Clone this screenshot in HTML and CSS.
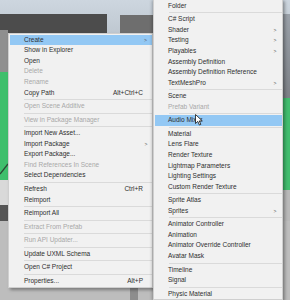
FILE: index.html
```html
<!DOCTYPE html>
<html lang="en">
<head>
    <meta charset="UTF-8">
    <meta name="viewport" content="width=device-width, initial-scale=1.0">
    <title>Project - Create menu</title>
    <link rel="stylesheet" href="styles.css">
</head>
<body>
    <div class="scene">
        <div class="sky"></div>
        <div class="obj box-a"></div>
        <div class="obj box-b"></div>
        <div class="obj box-c"></div>
        <div class="obj grass-l"></div>
        <div class="obj grass-r"></div>
        <div class="obj pale-l"></div>
        <div class="obj dark-l"></div>
        <div class="obj floor"></div>
        <div class="obj post"></div>
        <div class="obj right-top"></div>
        <svg class="obj ridge" width="8" height="20" viewBox="0 0 8 20">
            <path d="M0 16 L8 6" stroke="#2d4a36" stroke-width="1.4"/>
        </svg>
    </div>

    <!-- project window context menu -->
    <div class="menu context">
        <div class="item hover"><span class="label">Create</span><span class="arrow">&gt;</span></div>
        <div class="item"><span class="label">Show in Explorer</span><span class="arrow"></span></div>
        <div class="item"><span class="label">Open</span><span class="arrow"></span></div>
        <div class="item off"><span class="label">Delete</span><span class="arrow"></span></div>
        <div class="item off"><span class="label">Rename</span><span class="arrow"></span></div>
        <div class="item"><span class="label">Copy Path</span><span class="key">Alt+Ctrl+C</span><span class="arrow"></span></div>
        <div class="sep"></div>
        <div class="item off"><span class="label">Open Scene Additive</span><span class="arrow"></span></div>
        <div class="sep"></div>
        <div class="item off"><span class="label">View in Package Manager</span><span class="arrow"></span></div>
        <div class="sep"></div>
        <div class="item"><span class="label">Import New Asset...</span><span class="arrow"></span></div>
        <div class="item"><span class="label">Import Package</span><span class="arrow">&gt;</span></div>
        <div class="item"><span class="label">Export Package...</span><span class="arrow"></span></div>
        <div class="item off"><span class="label">Find References In Scene</span><span class="arrow"></span></div>
        <div class="item"><span class="label">Select Dependencies</span><span class="arrow"></span></div>
        <div class="sep"></div>
        <div class="item"><span class="label">Refresh</span><span class="key">Ctrl+R</span><span class="arrow"></span></div>
        <div class="item"><span class="label">Reimport</span><span class="arrow"></span></div>
        <div class="sep"></div>
        <div class="item"><span class="label">Reimport All</span><span class="arrow"></span></div>
        <div class="sep"></div>
        <div class="item off"><span class="label">Extract From Prefab</span><span class="arrow"></span></div>
        <div class="sep"></div>
        <div class="item off"><span class="label">Run API Updater...</span><span class="arrow"></span></div>
        <div class="sep"></div>
        <div class="item"><span class="label">Update UXML Schema</span><span class="arrow"></span></div>
        <div class="sep"></div>
        <div class="item"><span class="label">Open C# Project</span><span class="arrow"></span></div>
        <div class="sep"></div>
        <div class="item"><span class="label">Properties...</span><span class="key">Alt+P</span><span class="arrow"></span></div>
    </div>

    <!-- Create submenu -->
    <div class="menu sub">
        <div class="item"><span class="label">Folder</span><span class="arrow"></span></div>
        <div class="sep"></div>
        <div class="item"><span class="label">C# Script</span><span class="arrow"></span></div>
        <div class="item"><span class="label">Shader</span><span class="arrow">&gt;</span></div>
        <div class="item"><span class="label">Testing</span><span class="arrow">&gt;</span></div>
        <div class="item"><span class="label">Playables</span><span class="arrow">&gt;</span></div>
        <div class="item"><span class="label">Assembly Definition</span><span class="arrow"></span></div>
        <div class="item"><span class="label">Assembly Definition Reference</span><span class="arrow"></span></div>
        <div class="item"><span class="label">TextMeshPro</span><span class="arrow">&gt;</span></div>
        <div class="sep"></div>
        <div class="item"><span class="label">Scene</span><span class="arrow"></span></div>
        <div class="item off"><span class="label">Prefab Variant</span><span class="arrow"></span></div>
        <div class="sep"></div>
        <div class="item hover"><span class="label">Audio Mixer</span><span class="arrow"></span></div>
        <div class="sep"></div>
        <div class="item"><span class="label">Material</span><span class="arrow"></span></div>
        <div class="item"><span class="label">Lens Flare</span><span class="arrow"></span></div>
        <div class="item"><span class="label">Render Texture</span><span class="arrow"></span></div>
        <div class="item"><span class="label">Lightmap Parameters</span><span class="arrow"></span></div>
        <div class="item"><span class="label">Lighting Settings</span><span class="arrow"></span></div>
        <div class="item"><span class="label">Custom Render Texture</span><span class="arrow"></span></div>
        <div class="sep"></div>
        <div class="item"><span class="label">Sprite Atlas</span><span class="arrow"></span></div>
        <div class="item"><span class="label">Sprites</span><span class="arrow">&gt;</span></div>
        <div class="sep"></div>
        <div class="item"><span class="label">Animator Controller</span><span class="arrow"></span></div>
        <div class="item"><span class="label">Animation</span><span class="arrow"></span></div>
        <div class="item"><span class="label">Animator Override Controller</span><span class="arrow"></span></div>
        <div class="item"><span class="label">Avatar Mask</span><span class="arrow"></span></div>
        <div class="sep"></div>
        <div class="item"><span class="label">Timeline</span><span class="arrow"></span></div>
        <div class="item"><span class="label">Signal</span><span class="arrow"></span></div>
        <div class="sep"></div>
        <div class="item"><span class="label">Physic Material</span><span class="arrow"></span></div>
    </div>

    <svg class="cursor" width="8" height="12" viewBox="0 0 8 12">
        <path d="M0.5 0.5 L0.5 9.5 L2.8 7.4 L4.4 11 L5.8 10.4 L4.3 6.9 L7.3 6.9 Z" fill="#fff" stroke="#111" stroke-width="0.8" stroke-linejoin="round"/>
    </svg>
</body>
</html>
```

FILE: styles.css
```css
body {
    margin: 0;
    width: 290px;
    height: 300px;
    overflow: hidden;
    position: relative;
    font-family: "Liberation Sans", Arial, sans-serif;
    background: #b9b9b9;
}
.scene {
    position: absolute;
    inset: 0;
}
.sky {
    position: absolute;
    left: 0;
    top: 0;
    width: 290px;
    height: 40px;
    background: linear-gradient(#cdd6df, #bcc5ce);
}
.obj {
    position: absolute;
}
.box-a {
    left: 0;
    top: 14px;
    width: 107px;
    height: 22px;
    background: #4c4c4c;
}
.box-b {
    left: 120px;
    top: 15px;
    width: 40px;
    height: 22px;
    background: #6e6e6e;
}
.box-c {
    left: 0;
    top: 30px;
    width: 8px;
    height: 42px;
    background: #8f8f8f;
}
.grass-l {
    left: 0;
    top: 72px;
    width: 8px;
    height: 108px;
    background: #3fbf6c;
}
.ridge {
    left: 0;
    top: 158px;
}
.grass-r {
    left: 283px;
    top: 98px;
    width: 7px;
    height: 92px;
    background: #41bd6e;
}
.right-top {
    left: 283px;
    top: 14px;
    width: 7px;
    height: 84px;
    background: linear-gradient(#9aa1a9, #7c8086);
}
.pale-l {
    left: 0;
    top: 180px;
    width: 8px;
    height: 26px;
    background: #d9d9d9;
}
.dark-l {
    left: 0;
    top: 205px;
    width: 8px;
    height: 16px;
    background: #555;
}
.floor {
    left: 0;
    top: 221px;
    width: 290px;
    height: 79px;
    background: #bdbdbd;
}
.post {
    left: 130px;
    top: 286px;
    width: 8px;
    height: 14px;
    background: #8d8d8d;
}
.menu {
    position: absolute;
    background: #f1f1f1;
    border: 1px solid #cfcfcf;
    box-shadow: 2px 2px 3px rgba(0,0,0,0.35);
    font-size: 6.5px;
    color: #2e2e2e;
}
.context {
    left: 8px;
    top: 33px;
    width: 143px;
    padding: 0.7px 0 1px;
}
.sub {
    left: 153px;
    top: -1px;
    width: 128px;
    padding: 0.7px 0 0;
    box-shadow: -1px 1px 3px rgba(0,0,0,0.25), 2px 2px 3px rgba(0,0,0,0.3);
}
.item {
    display: flex;
    align-items: center;
    height: 10.58px;
    line-height: 10.58px;
    padding-left: 15px;
    padding-right: 3px;
    white-space: nowrap;
}
.sub .item {
    padding-left: 14px;
    padding-right: 4px;
}
.label {
    flex: 1;
}
.key {
    margin-left: 6px;
}
.arrow {
    width: 6px;
    text-align: center;
    font-size: 5px;
    color: #555;
}
.item.off {
    color: #a8a8a8;
}
.item.hover {
    background: #93c8f4;
    margin: 0 0.5px;
    padding-left: 14.5px;
}
.sub .item.hover {
    padding-left: 13.5px;
}
.sep {
    height: 1px;
    margin: 0.97px 0 0.97px 15px;
    background: #dadada;
}
.cursor {
    position: absolute;
    left: 195px;
    top: 114px;
}
```
